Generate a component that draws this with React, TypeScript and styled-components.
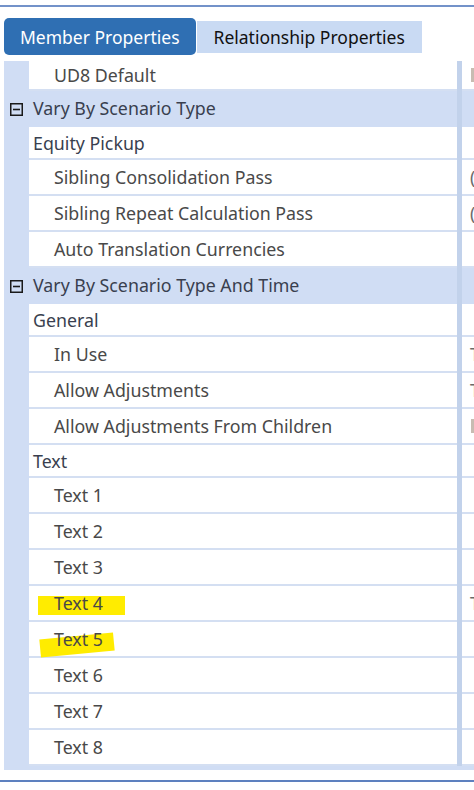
import React from 'react';
import styled, { createGlobalStyle } from 'styled-components';

const GlobalStyle = createGlobalStyle`
    html, body {
        margin: 0;
        padding: 0;
        background: #ffffff;
        overflow: hidden;
    }
    body {
        font-family: "Noto Sans", "Open Sans", sans-serif;
    }
`;

const Frame = styled.div`
    width: 474px;
    height: 790px;
    overflow: hidden;
    display: flex;
    flex-direction: column;
    background: #ffffff;
`;

const Rule = styled.div`
    height: 2px;
    flex-shrink: 0;
    background: ${props => (props.$top ? '#7392c9' : '#5d80bf')};
    margin-top: ${props => (props.$top ? '5px' : '10px')};
`;

const TabBar = styled.div`
    display: flex;
    align-items: center;
    height: 37px;
    margin-top: 11px;
    padding-left: 4px;
    flex-shrink: 0;
`;

const Tab = styled.div`
    display: flex;
    align-items: center;
    box-sizing: border-box;
    height: ${props => (props.$active ? '37px' : '32px')};
    padding: 0 ${props => (props.$active ? '16px' : '17px')};
    margin-right: 1px;
    border-radius: ${props => (props.$active ? '5px' : '0')};
    background: ${props => (props.$active ? '#2f6fb3' : '#c9daf3')};
    color: ${props => (props.$active ? '#ffffff' : '#111111')};
    font-size: 17.5px;
    white-space: nowrap;
`;

const Grid = styled.div`
    display: flex;
    flex-direction: column;
    margin: 6px 0 0 4px;
    padding-bottom: 4px;
    background: #d0ddf4;
    flex-shrink: 0;
`;

const Row = styled.div`
    display: grid;
    grid-template-columns: 25px 428px 5px 60px;
    height: ${props => props.$height}px;
`;

const Gutter = styled.div`
    display: flex;
    align-items: center;
    padding-left: 6px;
`;

const NameCell = styled.div`
    display: flex;
    align-items: center;
    box-sizing: border-box;
    padding-left: ${props => (props.$indent ? '25px' : '4px')};
    background: ${props => (props.$group ? '#d0ddf4' : '#ffffff')};
    border-bottom: 2px solid ${props => (props.$group ? '#d0ddf4' : '#d4dff2')};
    color: ${props => (props.$indent ? '#494949' : '#393f4f')};
    font-size: 17.8px;
    white-space: nowrap;
`;

const Splitter = styled.div`
    background: #c2d2eb;
`;

const ValueCell = styled.div`
    display: flex;
    align-items: center;
    box-sizing: border-box;
    padding-left: 8px;
    overflow: hidden;
    background: ${props => (props.$group ? '#d0ddf4' : '#ffffff')};
    border-bottom: 2px solid ${props => (props.$group ? '#d0ddf4' : '#d4dff2')};
    color: #6a6a6a;
    font-size: 17.8px;
    white-space: nowrap;
`;

const Swatch = styled.span`
    display: inline-block;
    width: 10px;
    height: 14px;
    margin-left: 1px;
    background: #c8bcb2;
`;

const Highlight = styled.span`
    position: relative;
    z-index: 0;

    &::before {
        content: '';
        position: absolute;
        z-index: -1;
        top: ${props => props.$top}px;
        bottom: ${props => props.$bottom}px;
        left: ${props => props.$left}px;
        right: ${props => props.$right}px;
        background: #ffec00;
        transform: rotate(${props => props.$tilt}deg);
    }
`;

const CollapseIcon = () => (
    <svg width="13" height="13" viewBox="0 0 13 13">
        <rect x="0.75" y="0.75" width="11.5" height="11.5" fill="none" stroke="#1a1a1a" strokeWidth="1.5" />
        <line x1="3" y1="6.5" x2="10" y2="6.5" stroke="#1a1a1a" strokeWidth="1.6" />
    </svg>
);

const rows = [
    { label: 'UD8 Default', kind: 'item', height: 30, value: 'swatch' },
    { label: 'Vary By Scenario Type', kind: 'group', height: 36 },
    { label: 'Equity Pickup', kind: 'category', height: 33 },
    { label: 'Sibling Consolidation Pass', kind: 'item', height: 36, value: '(Use Default)' },
    { label: 'Sibling Repeat Calculation Pass', kind: 'item', height: 36, value: '(Use Default)' },
    { label: 'Auto Translation Currencies', kind: 'item', height: 36 },
    { label: 'Vary By Scenario Type And Time', kind: 'group', height: 36 },
    { label: 'General', kind: 'category', height: 33 },
    { label: 'In Use', kind: 'item', height: 36, value: 'True' },
    { label: 'Allow Adjustments', kind: 'item', height: 36, value: 'True' },
    { label: 'Allow Adjustments From Children', kind: 'item', height: 36, value: 'swatch' },
    { label: 'Text', kind: 'category', height: 33 },
    { label: 'Text 1', kind: 'item', height: 36 },
    { label: 'Text 2', kind: 'item', height: 36 },
    { label: 'Text 3', kind: 'item', height: 36 },
    { label: 'Text 4', kind: 'item', height: 36, value: 'True', mark: { top: 5, bottom: 0, left: -16, right: -22, tilt: 0 } },
    { label: 'Text 5', kind: 'item', height: 36, mark: { top: 9, bottom: -3, left: -14, right: -11, tilt: -5.5 } },
    { label: 'Text 6', kind: 'item', height: 36 },
    { label: 'Text 7', kind: 'item', height: 36 },
    { label: 'Text 8', kind: 'item', height: 36 },
];

export default function App() {
    return (
        <>
            <GlobalStyle />
            <Frame>
                <Rule $top />
                <TabBar>
                    <Tab $active>Member Properties</Tab>
                    <Tab>Relationship Properties</Tab>
                </TabBar>
                <Grid>
                    {rows.map(row => {
                        const group = row.kind === 'group';
                        return (
                            <Row key={row.label} $height={row.height}>
                                <Gutter>{group && <CollapseIcon />}</Gutter>
                                <NameCell $group={group} $indent={row.kind === 'item'}>
                                    {row.mark ? (
                                        <Highlight
                                            $top={row.mark.top}
                                            $bottom={row.mark.bottom}
                                            $left={row.mark.left}
                                            $right={row.mark.right}
                                            $tilt={row.mark.tilt}
                                        >
                                            {row.label}
                                        </Highlight>
                                    ) : row.label}
                                </NameCell>
                                <Splitter />
                                <ValueCell $group={group}>
                                    {row.value === 'swatch' ? <Swatch /> : row.value}
                                </ValueCell>
                            </Row>
                        );
                    })}
                </Grid>
                <Rule />
            </Frame>
        </>
    );
}
